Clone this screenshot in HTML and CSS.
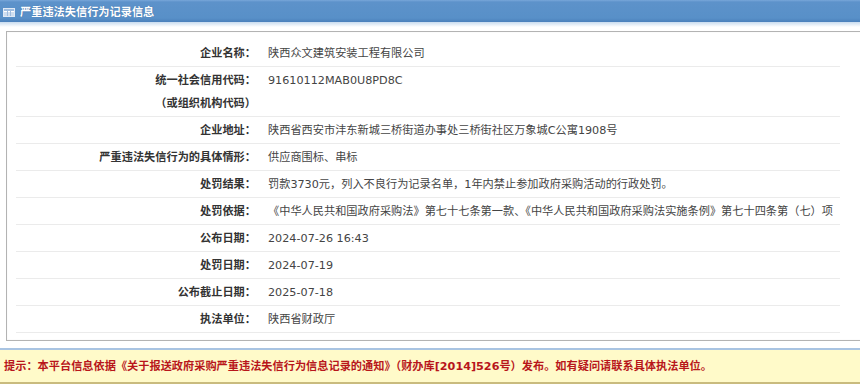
FILE: index.html
```
<!DOCTYPE html>
<html lang="zh-CN">
<head>
    <meta charset="UTF-8">
    <title>严重违法失信行为记录信息</title>
    <link rel="stylesheet" href="styles.css">
</head>
<body>
    <!-- Title bar -->
    <div class="title-bar">
        <svg class="title-icon" width="12" height="9" viewBox="0 0 12 9">
            <rect x="0.5" y="0.5" width="11" height="8" fill="#ffffff" stroke="#dfe9f5"/>
            <rect x="1" y="1" width="10" height="2" fill="#9fbde0"/>
            <line x1="1" y1="5" x2="11" y2="5" stroke="#9fbde0"/>
            <line x1="1" y1="7" x2="11" y2="7" stroke="#9fbde0"/>
            <line x1="4.5" y1="3" x2="4.5" y2="8" stroke="#9fbde0"/>
            <line x1="7.5" y1="3" x2="7.5" y2="8" stroke="#9fbde0"/>
        </svg>
        <span class="title-text">严重违法失信行为记录信息</span>
    </div>
    <div class="title-shade"></div>

    <!-- Record details -->
    <div class="record-box">
        <table class="record-table">
            <tr>
                <td class="label">企业名称：</td>
                <td class="value">陕西众文建筑安装工程有限公司</td>
            </tr>
            <tr>
                <td class="label">统一社会信用代码：<br>（或组织机构代码）</td>
                <td class="value">91610112MAB0U8PD8C</td>
            </tr>
            <tr>
                <td class="label">企业地址：</td>
                <td class="value">陕西省西安市沣东新城三桥街道办事处三桥街社区万象城C公寓1908号</td>
            </tr>
            <tr>
                <td class="label">严重违法失信行为的具体情形：</td>
                <td class="value">供应商围标、串标</td>
            </tr>
            <tr>
                <td class="label">处罚结果：</td>
                <td class="value">罚款3730元，列入不良行为记录名单，1年内禁止参加政府采购活动的行政处罚。</td>
            </tr>
            <tr>
                <td class="label">处罚依据：</td>
                <td class="value">《中华人民共和国政府采购法》第七十七条第一款、《中华人民共和国政府采购法实施条例》第七十四条第（七）项</td>
            </tr>
            <tr>
                <td class="label">公布日期：</td>
                <td class="value">2024-07-26 16:43</td>
            </tr>
            <tr>
                <td class="label">处罚日期：</td>
                <td class="value">2024-07-19</td>
            </tr>
            <tr>
                <td class="label">公布截止日期：</td>
                <td class="value">2025-07-18</td>
            </tr>
            <tr>
                <td class="label">执法单位：</td>
                <td class="value">陕西省财政厅</td>
            </tr>
        </table>
    </div>

    <!-- Notice -->
    <div class="notice">
        提示：本平台信息依据《关于报送政府采购严重违法失信行为信息记录的通知》（财办库[2014]526号）发布。如有疑问请联系具体执法单位。
    </div>
</body>
</html>
```

FILE: styles.css
```
body {
    margin: 0;
    overflow: hidden;
    background-color: #ffffff;
    font-family: "DejaVu Sans", "Noto Sans CJK SC", sans-serif;
    font-size: 11.2px;
    color: #333;
}

.title-bar {
    display: flex;
    align-items: center;
    height: 22px;
    padding-left: 3px;
    background: linear-gradient(#78a7d9 0px, #5d92ca 2px, #5890c8 18px, #4a80bb 22px);
}

.title-icon {
    margin-right: 5px;
    margin-top: 2px;
}

.title-text {
    color: #ffffff;
    font-weight: bold;
    text-shadow: 0 0 1px rgba(30, 70, 120, 0.5);
}

.title-shade {
    height: 5px;
    background: linear-gradient(#c9dcef, #ffffff);
}

.record-box {
    margin: 4px -6px 0 6px;
    padding: 8px 25px 7px 9px;
    border: 1px solid #b3b3b3;
    box-shadow: inset 0 0 2px rgba(0, 0, 0, 0.06);
}

.record-table {
    width: 100%;
    border-collapse: collapse;
}

.record-table td {
    height: 23px;
    padding: 2px 0 1px;
    line-height: 23px;
    border-bottom: 1px solid #ebebeb;
    vertical-align: top;
}

.record-table .label {
    width: 240px;
    text-align: right;
    font-weight: bold;
    color: #333;
}

.record-table .value {
    padding-left: 12px;
    color: #444;
}

.notice {
    margin-top: 7px;
    height: 32px;
    line-height: 33px;
    padding-left: 4px;
    border-top: 2px solid #a9c4e2;
    border-bottom: 2px solid #c9bb7e;
    background-color: #fffac9;
    color: #b8161b;
    font-weight: bold;
    white-space: nowrap;
}
```
